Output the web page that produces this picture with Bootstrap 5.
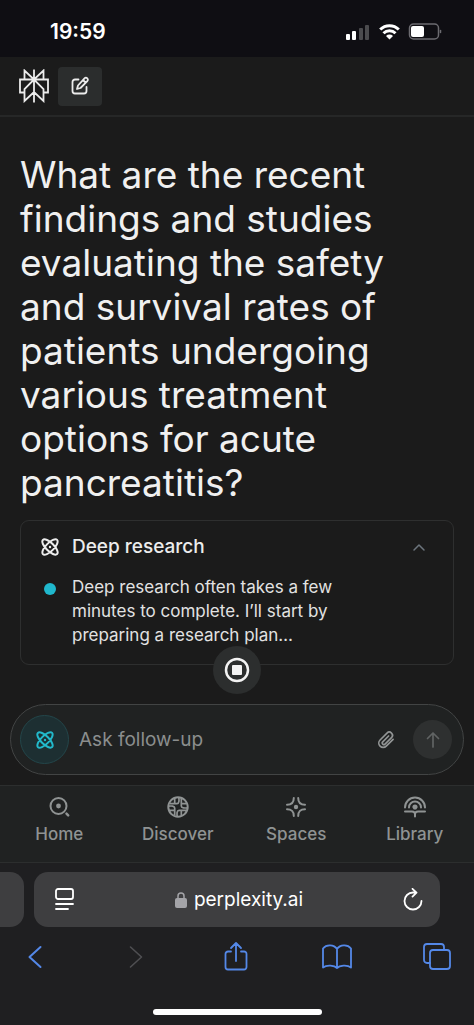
<!DOCTYPE html>
<html lang="en" data-bs-theme="dark">
<head>
<meta charset="utf-8">
<meta name="viewport" content="width=device-width, initial-scale=1">
<title>Perplexity</title>
<link href="https://cdn.jsdelivr.net/npm/bootstrap@5.3.0/dist/css/bootstrap.min.css" rel="stylesheet">
<style>
  body { background: #1b1b1b; color: #ececec; font-family: Inter, "Liberation Sans", sans-serif; }
  svg { display: block; fill: none; stroke: currentColor; stroke-width: 2; stroke-linecap: round; stroke-linejoin: round; flex: none; }
  .solid { fill: currentColor; stroke: none; }
  .status-bar { background: #0f0e13; height: 57px; padding: 6px 32px 0 50px; color: #fff; }
  .clock { font-size: 21px; line-height: 24px; font-weight: 600; }
  .wifi { stroke-width: 3; stroke-linecap: butt; }
  .app-header { height: 60px; padding: 0 19px; border-bottom: 2px solid #262727; }
  .logo-mark { stroke-width: 1.8; stroke-linecap: butt; stroke-linejoin: miter; }
  .btn-new { width: 44px; height: 39px; border: 0; border-radius: 4px; background: #2b2d2d; color: #ececec; }
  .question { font-size: 37px; line-height: 44px; font-weight: 400; color: #f0f0f0; padding-top: 36px; margin-bottom: 15px; }
  .research { background: transparent; border: 1px solid #2e2f2f; border-radius: 9px; padding: 14px 19px 17px; }
  .research-title { font-size: 19px; line-height: 24px; font-weight: 500; color: #ececec; }
  .research-text { font-size: 17px; line-height: 24px; max-width: 290px; color: #e2e2e2; }
  .research-row { gap: 12px; }
  .lead-col { width: 20px; }
  .dot { width: 12px; height: 12px; border-radius: 50%; background: #20b8cd; }
  .btn-stop { width: 48px; height: 48px; border: 0; background: #2c2e2e; color: #f3f3f3; bottom: -30px; z-index: 2; }
  .btn-stop:hover { background: #353737; }
  .ask-box { margin: 39px 10px 10px; height: 71px; border: 1px solid #424444; border-radius: 36px; background: #202222; padding: 0 11px 0 9px; }
  .btn-mode { width: 49px; height: 49px; background: #1d2f32; border: 1px solid #23464a; color: #22b9cb; }
  .ask-input, .ask-input:focus { background: transparent; border: 0; box-shadow: none; padding: 0 10px; font-size: 19px; line-height: 28px; color: #ececec; }
  .ask-input::placeholder { color: #8b8e8e; opacity: 1; }
  .btn-clip { color: #929595; }
  .btn-send { width: 39px; height: 39px; background: #2e3030; border: 0; color: #606363; }
  .tabs { background: #202222; border-top: 1px solid #2c2e2e; border-bottom: 1px solid #2c2e2e; height: 78px; padding-top: 9px; }
  .tabs a { color: #8f9393; font-size: 17px; line-height: 20px; font-weight: 500; text-decoration: none; gap: 5px; }
  .browser { background: #1f1f21; height: 162px; padding-top: 9px; }
  .tab-stub { width: 24px; background: #3e3e40; border-radius: 0 14px 14px 0; }
  .url-bar { height: 55px; background: #3e3e40; border-radius: 14px; color: #fff; padding: 0 16px 0 20px; margin: 0 34px 0 10px; }
  .url-text { font-size: 19px; line-height: 24px; gap: 7px; }
  .tools { padding: 13px 22px 0 20px; }
  .tools button { width: 30px; color: #5488e8; }
  .tools .off { color: #4f4f52; }
  .home-line { width: 169px; height: 6px; border-radius: 3px; background: #fff; margin: 35px auto 0; }
</style>
</head>
<body class="d-flex flex-column min-vh-100">

<svg class="d-none" aria-hidden="true">
  <symbol id="atom" viewBox="0 0 18 18">
    <path d="M16.100 1.900c-1.600-1.600-6 .3-9.900 4.200S.400 14.500 1.900 16.100s6-.3 9.900-4.200 5.800-8.400 4.300-10zM1.900 1.900C.300 3.500 2.200 7.900 6.100 11.800s8.400 5.800 10 4.300-.3-6-4.200-9.900S3.500.400 1.900 1.900z"/>
    <circle class="solid" cx="9" cy="9" r="1.200"/>
  </symbol>
</svg>

<div class="status-bar d-flex align-items-center justify-content-between">
  <span class="clock">19:59</span>
  <div class="d-flex align-items-center gap-2">
    <svg width="26" height="16" viewBox="0 0 26 16"><g class="solid"><rect x="1" y="10" width="4" height="6" rx="1"/><rect x="7" y="7" width="4" height="9" rx="1"/><g opacity=".25"><rect x="14" y="4" width="4" height="12" rx="1"/><rect x="20" y="1" width="4" height="15" rx="1"/></g></g></svg>
    <svg class="wifi" width="21" height="16" viewBox="0 0 21 16"><path d="M1.200 5.500a13.200 13.200 0 0 1 18.600 0M4.500 9.300a8.500 8.500 0 0 1 12 0"/><path class="solid" d="M10.500 15.500 7 12a5 5 0 0 1 7 0z"/></svg>
    <svg width="34" height="17" viewBox="0 0 34 17"><g style="stroke-width:1.500" stroke="#6c6b70"><rect x="1.500" y="1" width="29" height="15" rx="4"/><path d="M32.500 7.500v2"/></g><rect class="solid" x="3" y="3" width="13" height="11" rx="2"/></svg>
  </div>
</div>

<header class="app-header d-flex align-items-center">
  <a href="#" class="text-reset me-2" aria-label="Perplexity">
    <svg class="logo-mark" width="31" height="34" viewBox="0 0 31 34"><path d="M15 .500v33M1 10.500h28v13h-4.500M1 9.600v13.900h4.500M5.500 10.500V1.500l9.500 9 9.500-9v9M15 10.500l-9.500 9.500v12l9.500-9 9.500 9V20z"/></svg>
  </a>
  <button type="button" class="btn-new d-flex align-items-center justify-content-center p-0" aria-label="New thread">
    <svg width="20" height="20" viewBox="0 0 20 20"><path d="M8.500 3.500H5A2.500 2.500 0 0 0 2.500 6v9A2.500 2.500 0 0 0 5 17.500h9a2.500 2.500 0 0 0 2.500-2.500v-4M14.500 2.300a1.900 1.900 0 0 1 2.800 2.800L10.500 12 7 13l1-3.500zM13 4l2.500 2.500" style="stroke-width:1.800"/></svg>
  </button>
</header>

<main class="flex-grow-1 px-3 mx-1">
  <h1 class="question">What are the recent findings and studies evaluating the safety and survival rates of patients undergoing various treatment options for acute pancreatitis?</h1>
  <section class="card research">
    <div class="research-row d-flex align-items-center">
      <div class="lead-col"><svg width="20" height="20"><use href="#atom" x="1" y="1" width="18" height="18"/></svg></div>
      <h2 class="research-title mb-0 flex-grow-1">Deep research</h2>
      <button type="button" class="btn p-0 border-0 text-secondary me-2" aria-label="Collapse"><svg width="14" height="10" viewBox="0 0 14 10" style="stroke-width:1.500"><path d="M2 8l5-5 5 5"/></svg></button>
    </div>
    <div class="research-row d-flex mt-3">
      <div class="lead-col d-flex justify-content-center pt-1"><span class="dot mt-1"></span></div>
      <p class="research-text mb-0">Deep research often takes a few minutes to complete. I’ll start by preparing a research plan…</p>
    </div>
    <button type="button" class="btn btn-stop rounded-circle p-0 d-flex align-items-center justify-content-center position-absolute start-50 translate-middle-x" aria-label="Stop"><svg width="26" height="26" viewBox="0 0 26 26" style="stroke-width:2.500"><circle cx="13" cy="13" r="11"/><rect class="solid" x="8" y="8" width="10" height="10" rx="1"/></svg></button>
  </section>
</main>

<form class="ask-box d-flex align-items-center">
  <button type="button" class="btn btn-mode rounded-circle p-0 d-flex align-items-center justify-content-center flex-shrink-0" aria-label="Deep research mode"><svg width="20" height="20"><use href="#atom" x="1" y="1" width="18" height="18"/></svg></button>
  <input class="form-control ask-input" type="text" placeholder="Ask follow-up" aria-label="Ask follow-up">
  <button type="button" class="btn btn-clip p-0 border-0 me-3" aria-label="Attach"><svg width="22" height="20" viewBox="0 0 24 24"><path d="M20.500 11.200l-8.200 8.200a5.200 5.200 0 0 1-7.400-7.400l8.300-8.300a3.800 3.800 0 0 1 5.400 5.400l-7.800 7.800a1.900 1.900 0 0 1-2.700-2.700l7-7"/></svg></button>
  <button type="submit" class="btn btn-send rounded-circle p-0 d-flex align-items-center justify-content-center flex-shrink-0" aria-label="Send"><svg width="16" height="18" viewBox="0 0 16 18" style="stroke-width:1.700"><path d="M8 16V2M2.500 7.500 8 2l5.500 5.500"/></svg></button>
</form>

<nav class="tabs d-flex">
  <a href="#" class="w-25 d-flex flex-column align-items-center"><svg width="24" height="24" viewBox="0 0 24 24"><circle cx="11.500" cy="11" r="8"/><circle class="solid" cx="11.500" cy="11" r="2.400"/><path d="M19.500 18.700l1.700 1.700" style="stroke-width:2.500"/></svg>Home</a>
  <a href="#" class="w-25 d-flex flex-column align-items-center"><svg width="24" height="24" viewBox="0 0 24 24" style="stroke-width:1.700;stroke-linecap:butt"><circle cx="12" cy="12" r="9.700" style="stroke-width:2"/><path d="M3.500 8.700H11c2.200 0 2.200-3.500 1.800-6.200M15.300 3.500V11c0 2.200 3.500 2.200 6.200 1.800M20.500 15.300H13c-2.200 0-2.200 3.500-1.800 6.200M8.700 20.500V13c0-2.200-3.500-2.200-6.200-1.800M8.700 3v5.700M21 8.700h-5.700M15.300 21v-5.700M3 15.300h5.700"/></svg>Discover</a>
  <a href="#" class="w-25 d-flex flex-column align-items-center"><svg width="24" height="24" viewBox="0 0 24 24"><path d="M9.800 3C9.800 7.500 7.500 9.800 3 9.800M14.200 3c0 4.500 2.300 6.800 6.800 6.800M9.800 21c0-4.500-2.300-6.800-6.800-6.800M14.200 21c0-4.500 2.300-6.800 6.800-6.800"/><circle class="solid" cx="12" cy="12" r="2.200"/></svg>Spaces</a>
  <a href="#" class="w-25 d-flex flex-column align-items-center"><svg width="24" height="24" viewBox="0 0 24 24"><path d="M2 12.500a10 10 0 0 1 20 0M6 12.500a6 6 0 0 1 12 0M2 16.500h7c1.700 0 3 .8 3 2.500 0-1.700 1.300-2.500 3-2.500h7M12 18v3.500"/><path class="solid" d="M9.400 12a2.600 2.600 0 1 1 5.200 0c0 1.200-.9 1.600-1.500 2.500h-2.200c-.6-.9-1.500-1.300-1.500-2.500z"/></svg>Library</a>
</nav>

<footer class="browser">
  <div class="d-flex">
    <div class="tab-stub"></div>
    <div class="url-bar flex-grow-1 d-flex align-items-center justify-content-between">
      <button type="button" class="btn p-0 border-0 text-white" aria-label="Page menu"><svg width="22" height="24" viewBox="0 0 22 24"><path d="M4 1h13a2 2 0 0 1 2 2v6a2 2 0 0 1-2 2H4a2 2 0 0 1-2-2V3a2 2 0 0 1 2-2zM2 16h17M2 21h12" style="stroke-width:1.800"/></svg></button>
      <a href="#" class="url-text text-white text-decoration-none d-flex align-items-center"><svg width="12" height="18" viewBox="0 0 12 18" color="#a4a4a8"><rect class="solid" y="7" width="12" height="10" rx="2"/><path d="M3 8V5a3 3 0 0 1 6 0v3" style="stroke-width:1.500"/></svg>perplexity.ai</a>
      <button type="button" class="btn p-0 border-0 text-white" aria-label="Reload"><svg width="22" height="24" viewBox="0 0 22 24"><path d="M12.500 4.500H11a8.500 8.500 0 1 0 8.500 8.500M10.500.800l4 3.900-4 3.900" style="stroke-width:1.800"/></svg></button>
    </div>
  </div>
  <div class="tools d-flex justify-content-between align-items-center">
    <button type="button" class="btn p-0 border-0 d-flex justify-content-center" aria-label="Back"><svg width="18" height="34" viewBox="0 0 18 34"><path d="M14.500 7l-11 10 11 10"/></svg></button>
    <button type="button" class="btn p-0 border-0 d-flex justify-content-center off" aria-label="Forward"><svg width="18" height="34" viewBox="0 0 18 34" style="stroke-width:1.600"><path d="M3.500 7l11 10-11 10"/></svg></button>
    <button type="button" class="btn p-0 border-0 d-flex justify-content-center" aria-label="Share"><svg width="26" height="34" viewBox="0 0 26 34" style="stroke-width:1.800"><path d="M8 11.500H5A2.500 2.500 0 0 0 2.500 14v13A2.500 2.500 0 0 0 5 29.500h16a2.500 2.500 0 0 0 2.500-2.500V14a2.500 2.500 0 0 0-2.500-2.500h-3M13 21V3M8 8l5-5 5 5"/></svg></button>
    <button type="button" class="btn p-0 border-0 d-flex justify-content-center" aria-label="Bookmarks"><svg width="30" height="34" viewBox="0 0 30 34" style="stroke-width:1.800"><path d="M15 9v19c-2.500-2.500-10-3.500-14-.5V8.500C4.500 4 12 4.500 15 9c3-4.500 10.500-5 14-.5v19c-4-3-11.500-2-14 .5"/></svg></button>
    <button type="button" class="btn p-0 border-0 d-flex justify-content-center" aria-label="Tabs"><svg width="30" height="34" viewBox="0 0 30 34" style="stroke-width:1.800"><path d="M8 23H5a3 3 0 0 1-3-3V7a3 3 0 0 1 3-3h14a3 3 0 0 1 3 3v3"/><rect x="8" y="10" width="20" height="19" rx="3"/></svg></button>
  </div>
  <div class="home-line"></div>
</footer>

<script src="https://cdn.jsdelivr.net/npm/bootstrap@5.3.0/dist/js/bootstrap.bundle.min.js"></script>
</body>
</html>
